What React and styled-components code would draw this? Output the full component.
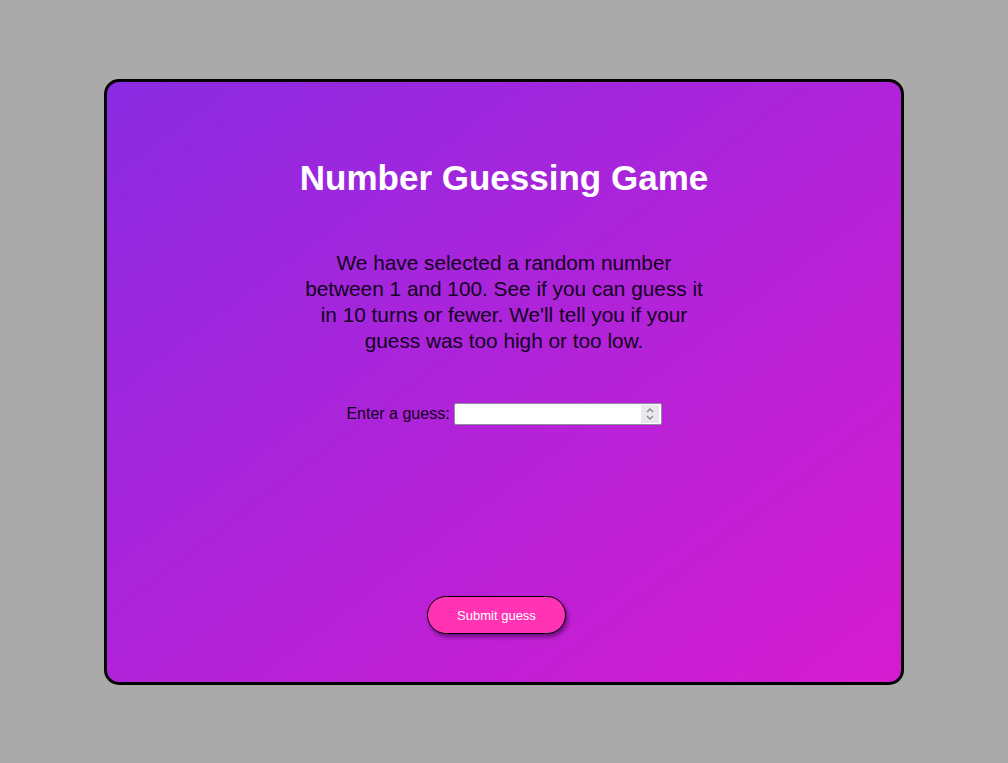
import React from 'react';
import styled, { createGlobalStyle } from 'styled-components';

const GlobalStyle = createGlobalStyle`
  html, body {
    margin: 0;
    padding: 0;
    background: #aaaaaa;
    font-family: "Liberation Sans", Arial, sans-serif;
  }
`;

const Page = styled.div`
  min-height: 763px;
  display: flex;
  justify-content: center;
  padding-top: 79px;
  box-sizing: border-box;
`;

const Card = styled.main`
  width: 800px;
  height: 606px;
  box-sizing: border-box;
  border: 3px solid #000;
  border-radius: 15px;
  background: linear-gradient(to bottom right, #8a2be2, #d61bd0);
  display: flex;
  flex-direction: column;
  align-items: center;
`;

const Title = styled.h1`
  margin: 76px 0 0;
  font-size: 35px;
  line-height: 40px;
  font-weight: 700;
  color: #fff;
`;

const Intro = styled.p`
  width: 410px;
  margin: 52px 0 0;
  font-size: 20.8px;
  line-height: 26px;
  text-align: center;
  color: #12001c;
`;

const Field = styled.div`
  margin-top: 49px;
  display: flex;
  align-items: center;
  gap: 4px;
  font-size: 16px;
  color: #12001c;
`;

const Label = styled.label`
  line-height: 20px;
`;

const InputWrap = styled.div`
  position: relative;
`;

const Input = styled.input`
  display: block;
  width: 208px;
  height: 22px;
  box-sizing: border-box;
  border: 1px solid #8f8f9d;
  border-radius: 2px;
  background: #fff;
  font: inherit;
  padding: 0 22px 0 2px;
`;

// number spinner drawn over the right end of the field
const Spinner = styled.span`
  position: absolute;
  top: 2px;
  right: 3px;
  width: 18px;
  height: 18px;
  background: #e9e9ed;
  display: flex;
  align-items: center;
  justify-content: center;
  pointer-events: none;
`;

const Submit = styled.button`
  margin-top: 171px;
  margin-right: 15px;
  width: 139px;
  height: 38px;
  border: 1px solid #000;
  border-radius: 19px;
  background: #ff33b4;
  color: #fff;
  font-family: "Liberation Sans", Arial, sans-serif;
  font-size: 13px;
  box-shadow: 2px 3px 4px rgba(40, 0, 60, 0.55);
  cursor: pointer;
`;

export default function App() {
  return (
    <>
      <GlobalStyle />
      <Page>
        <Card>
          <Title>Number Guessing Game</Title>
          <Intro>
            We have selected a random number between 1 and 100. See if you can
            guess it in 10 turns or fewer. We'll tell you if your guess was too
            high or too low.
          </Intro>
          <Field>
            <Label htmlFor="guessField">Enter a guess:</Label>
            <InputWrap>
              <Input type="text" inputMode="numeric" id="guessField" />
              <Spinner>
                <svg width="10" height="14" viewBox="0 0 10 14" fill="none" stroke="#8a8a92" strokeWidth="1.4">
                  <path d="M2 5 L5 2 L8 5" />
                  <path d="M2 9 L5 12 L8 9" />
                </svg>
              </Spinner>
            </InputWrap>
          </Field>
          <Submit type="button">Submit guess</Submit>
        </Card>
      </Page>
    </>
  );
}
